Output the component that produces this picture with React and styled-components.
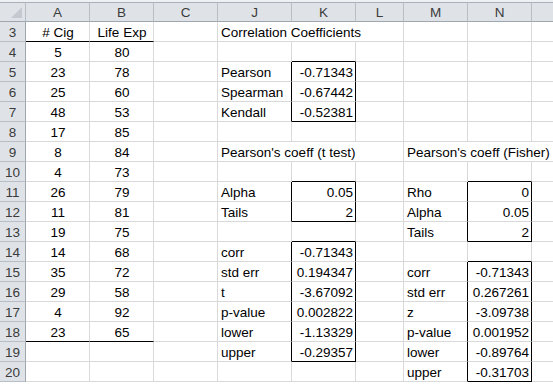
import React from 'react';
import styled, { createGlobalStyle } from 'styled-components';

const GlobalStyle = createGlobalStyle`
  body {
    margin: 0;
    background: #ffffff;
    font-family: "Liberation Sans", Arial, sans-serif;
  }
`

const GRID = '#d9d9d9';
const HEAD_BG = '#dfe3e8';
const HEAD_LINE = '#b8bec6';

const COLS = [
  { key: 'hdr', w: 26 },
  { key: 'A', w: 64, label: 'A', align: 'center' },
  { key: 'B', w: 64, label: 'B', align: 'center' },
  { key: 'C', w: 64, label: 'C', align: 'center' },
  { key: 'J', w: 74, label: 'J', align: 'left' },
  { key: 'K', w: 64, label: 'K', align: 'right' },
  { key: 'L', w: 48, label: 'L', align: 'left' },
  { key: 'M', w: 64, label: 'M', align: 'left' },
  { key: 'N', w: 64, label: 'N', align: 'right' },
  { key: 'X', w: 22, label: '', align: 'left' },
];

// cell values, spans where text runs over into the next columns
const DATA = {
  3: { A: '# Cig', B: 'Life Exp', J: ['Correlation Coefficients', 3] },
  4: { A: 5, B: 80 },
  5: { A: 23, B: 78, J: 'Pearson', K: '-0.71343' },
  6: { A: 25, B: 60, J: 'Spearman', K: '-0.67442' },
  7: { A: 48, B: 53, J: 'Kendall', K: '-0.52381' },
  8: { A: 17, B: 85 },
  9: { A: 8, B: 84, J: ["Pearson's coeff (t test)", 3], M: ["Pearson's coeff (Fisher)", 3] },
  10: { A: 4, B: 73 },
  11: { A: 26, B: 79, J: 'Alpha', K: '0.05', M: 'Rho', N: '0' },
  12: { A: 11, B: 81, J: 'Tails', K: '2', M: 'Alpha', N: '0.05' },
  13: { A: 19, B: 75, M: 'Tails', N: '2' },
  14: { A: 14, B: 68, J: 'corr', K: '-0.71343' },
  15: { A: 35, B: 72, J: 'std err', K: '0.194347', M: 'corr', N: '-0.71343' },
  16: { A: 29, B: 58, J: 't', K: '-3.67092', M: 'std err', N: '0.267261' },
  17: { A: 4, B: 92, J: 'p-value', K: '0.002822', M: 'z', N: '-3.09738' },
  18: { A: 23, B: 65, J: 'lower', K: '-1.13329', M: 'p-value', N: '0.001952' },
  19: { J: 'upper', K: '-0.29357', M: 'lower', N: '-0.89764' },
  20: { M: 'upper', N: '-0.31703' },
};

const BOXES = [
  { c: 'K', r1: 5, r2: 7 },
  { c: 'K', r1: 11, r2: 12 },
  { c: 'K', r1: 14, r2: 19 },
  { c: 'N', r1: 11, r2: 13 },
  { c: 'N', r1: 15, r2: 20 },
];

const ROWS = Array.from({ length: 18 }, (_, i) => i + 3);
const keys = COLS.map(c => c.key);

const rightBlack = (r, c) => {
  const next = keys[keys.indexOf(c) + 1];
  return BOXES.some(b => r >= b.r1 && r <= b.r2 && (b.c === c || b.c === next));
};

const bottomBlack = (r, c) => {
  if ((r === 3 || r === 18) && (c === 'A' || c === 'B')) return true;
  return BOXES.some(b => b.c === c && (r === b.r1 - 1 || r === b.r2));
};

const Sheet = styled.div`
  width: 553px;
  height: 384px;
  overflow: hidden;
  background: #ffffff;
`

const TopStrip = styled.div`
  height: 2px;
  background: #eef0f3;
`

const Grid = styled.div`
  display: grid;
  grid-template-columns: ${COLS.map(c => c.w + 'px').join(' ')};
  grid-template-rows: 20px repeat(${ROWS.length + 1}, 20px);
`

const HeadCell = styled.div`
  box-sizing: border-box;
  background: ${HEAD_BG};
  border-top: 1px solid #a9b0b9;
  border-bottom: 1px solid #9ea6b0;
  border-right: 1px solid ${HEAD_LINE};
  color: #3b3b3b;
  font-size: 13.5px;
  display: flex;
  align-items: center;
  justify-content: center;
  padding-top: 1px;
  position: relative;
`

const CornerMark = styled.div`
  position: absolute;
  right: 3px;
  bottom: 3px;
  width: 0;
  height: 0;
  border-left: 11px solid transparent;
  border-bottom: 11px solid #c4c9cf;
`

const RowHead = styled.div`
  box-sizing: border-box;
  background: ${HEAD_BG};
  border-right: 1px solid #9ea6b0;
  border-bottom: 1px solid ${HEAD_LINE};
  color: #3b3b3b;
  font-size: 13.5px;
  display: flex;
  align-items: flex-end;
  justify-content: center;
  padding-bottom: 1px;
`

const Cell = styled.div`
  box-sizing: border-box;
  grid-column: span ${({ $span }) => $span};
  border-right: 1px solid ${({ $right }) => ($right ? '#000000' : GRID)};
  border-bottom: 1px solid ${({ $bottom }) => ($bottom ? '#000000' : GRID)};
  color: #000000;
  font-size: 13.5px;
  white-space: nowrap;
  overflow: hidden;
  display: flex;
  align-items: flex-end;
  padding: 0 2px 1px 3px;
  justify-content: ${({ $align }) =>
    $align === 'right' ? 'flex-end' : $align === 'center' ? 'center' : 'flex-start'};
`

const renderRow = r => {
  const row = DATA[r] || {};
  const out = [<RowHead key={`h${r}`}>{r}</RowHead>];
  for (let i = 1; i < COLS.length; i++) {
    const col = COLS[i];
    let v = row[col.key];
    let span = 1;
    if (Array.isArray(v)) {
      [v, span] = v;
      span = Math.min(span, COLS.length - i);
    }
    const lastKey = COLS[i + span - 1].key;
    out.push(
      <Cell
        key={`${r}${col.key}`}
        $span={span}
        $align={col.align}
        $right={rightBlack(r, lastKey)}
        $bottom={bottomBlack(r, col.key)}
      >
        {v}
      </Cell>
    );
    i += span - 1;
  }
  return out;
};

const App = () => (
  <Sheet>
    <GlobalStyle />
    <TopStrip />
    <Grid>
      <HeadCell><CornerMark /></HeadCell>
      {COLS.slice(1).map(c => <HeadCell key={c.key}>{c.label}</HeadCell>)}
      {ROWS.map(renderRow)}
    </Grid>
  </Sheet>
);

export default App;
